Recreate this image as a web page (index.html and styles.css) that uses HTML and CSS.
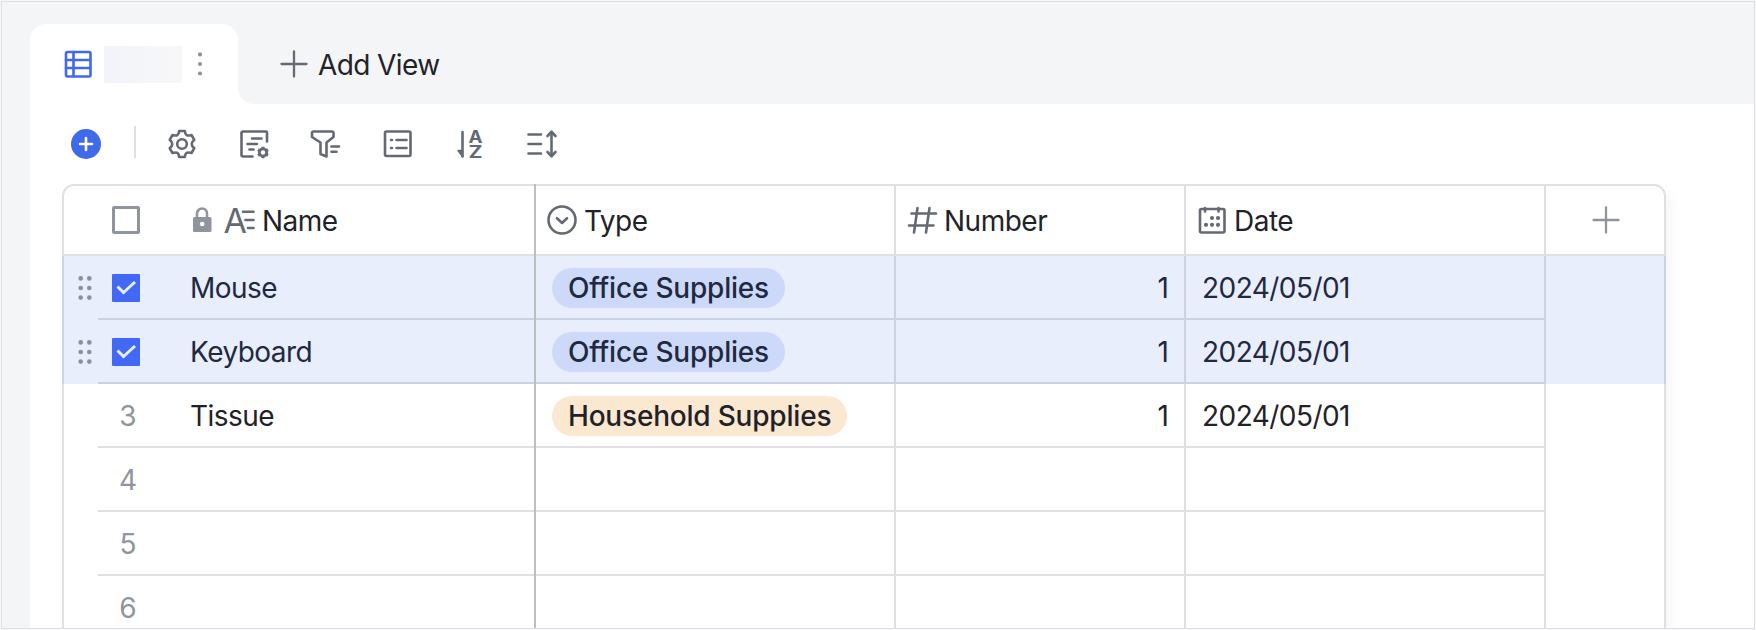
FILE: index.html
```html
<!DOCTYPE html>
<html lang="en">
<head>
    <meta charset="UTF-8">
    <meta name="viewport" content="width=device-width, initial-scale=1.0">
    <title>Grid View</title>
    <link rel="stylesheet" href="styles.css">
</head>
<body>
    <div class="window">
        <div class="tab-bar">
            <div class="tab">
                <svg class="icon-grid" width="28" height="28" viewBox="0 0 28 28">
                    <rect x="2" y="2" width="24.5" height="24.5" rx="1.5"/>
                    <path d="M9.5 2v24M2 10h24M2 18h24"/>
                </svg>
                <span class="tab-name"></span>
                <svg class="icon-more" width="6" height="28" viewBox="0 0 6 28">
                    <circle cx="3" cy="4.4" r="2.1"/>
                    <circle cx="3" cy="14" r="2.1"/>
                    <circle cx="3" cy="23.5" r="2.1"/>
                </svg>
            </div>
            <div class="add-view">
                <svg class="icon thin" width="28" height="28" viewBox="0 0 28 28"><path d="M14 1.5v25M1.5 14h25"/></svg>
                <span class="add-label">Add View</span>
            </div>
        </div>

        <div class="panel">
            <div class="toolbar">
                <svg class="icon-add" width="30" height="30" viewBox="0 0 30 30">
                    <circle cx="15" cy="15" r="15"/>
                    <path d="M15 9v12M9 15h12"/>
                </svg>
                <span class="divider"></span>
                <!-- settings -->
                <svg class="icon" width="30" height="30" viewBox="0 0 30 30">
                    <path d="M12.2 2h5.600q.4 3.200 1.800 4.100 1.600 1 4.900-.1l2.800 4.800q-2.600 2.100-2.600 4.200t2.600 4.200l-2.800 4.800q-3.300-1.100-4.900-.1-1.400.9-1.800 4.100h-5.600q-.4-3.200-1.800-4.100-1.600-1-4.900.1l-2.800-4.800q2.600-2.100 2.600-4.200t-2.600-4.200l2.800-4.800q3.300 1.100 4.900.1 1.400-.9 1.800-4.100z"/>
                    <circle cx="15" cy="15" r="4.8"/>
                </svg>
                <!-- customize fields -->
                <svg class="icon" width="30" height="30" viewBox="0 0 30 30">
                    <path d="M13.5 27.5H4A1.5 1.5 0 0 1 2.5 26V4A1.5 1.5 0 0 1 4 2.5h23a1 1 0 0 1 1 1v9"/>
                    <path d="M13 9.5h9.5M8.5 15H18M10.5 20.5h4"/>
                    <circle class="cog" cx="24" cy="23.5" r="3.7"/>
                    <path class="cog-teeth" d="M24 17.7v11.6M19 20.6l10 5.8M19 26.4l10-5.8"/>
                    <circle class="cog-hole" cx="24" cy="23.5" r="2.2"/>
                </svg>
                <!-- filter -->
                <svg class="icon" width="30" height="30" viewBox="0 0 30 30">
                    <path d="M2.5 2.5H21A1.5 1.5 0 0 1 22.5 4v4l-7 5.500v14l-6-2.500V13.500L1 8V4a1.500 1.500 0 0 1 1.500-1.500z"/>
                    <path d="M20.500 17.500H28M20.500 22.700h5"/>
                </svg>
                <!-- group -->
                <svg class="icon" width="30" height="30" viewBox="0 0 30 30">
                    <rect x="2" y="2.5" width="25.5" height="24.5" rx="1.5"/>
                    <path d="M8 11h1M13.5 11h10M8 19h1M13.5 19h10"/>
                </svg>
                <!-- sort -->
                <svg class="icon" width="30" height="30" viewBox="0 0 30 30">
                    <path d="M7.5 3v24.5"/>
                    <path class="solid" d="M3 21.5h4.5v6z"/>
                    <text class="icon-letter" x="13.5" y="14" textLength="14" lengthAdjust="spacingAndGlyphs">A</text>
                    <text class="icon-letter" x="13.5" y="29" textLength="14" lengthAdjust="spacingAndGlyphs">Z</text>
                </svg>
                <!-- row height -->
                <svg class="icon" width="32" height="30" viewBox="0 0 32 30">
                    <path d="M1.5 5.5H14M1.5 15H14M1.5 24.5H14"/>
                    <path d="M24.5 3.5v23M20.5 7l4-4.300 4 4.300M20.500 23l4 4.300 4-4.300"/>
                </svg>
            </div>

            <div class="grid">
                <div class="row head">
                    <div class="handle"></div>
                    <div class="cell name">
                        <span class="index"><span class="checkbox"></span></span>
                        <svg class="icon-lock" width="20" height="28" viewBox="0 0 20 28">
                            <path d="M5 11V7.5a5 5 0 0 1 10 0V11"/>
                            <rect x="1" y="11" width="18.5" height="15" rx="1.5"/>
                            <circle cx="10.2" cy="18" r="2.3"/>
                        </svg>
                        <svg class="icon icon-text" width="32" height="30" viewBox="0 0 32 30">
                            <text x="-0.5" y="27.5">A</text>
                            <path d="M19 6.7h10.5M21.500 15h8M24 23h5.500"/>
                        </svg>
                        <span class="label">Name</span>
                    </div>
                    <div class="cell type">
                        <svg class="icon" width="30" height="30" viewBox="0 0 30 30">
                            <circle cx="15" cy="15" r="13.5"/>
                            <path d="M10 13.2l5 4.800 5-4.800"/>
                        </svg>
                        <span class="label">Type</span>
                    </div>
                    <div class="cell number">
                        <svg class="icon" width="30" height="30" viewBox="0 0 30 30">
                            <path d="M10.5 3L7 27.5M22.5 3L19 27.5M4.5 8.5H29M2 20.5h24.5"/>
                        </svg>
                        <span class="label">Number</span>
                    </div>
                    <div class="cell date">
                        <svg class="icon icon-date" width="30" height="30" viewBox="0 0 30 30">
                            <rect x="3" y="4" width="24.5" height="23.5" rx="1.5"/>
                            <path d="M8 3v3.5M21.5 3v3.5"/>
                            <g class="dots">
                                <circle cx="15" cy="13" r="2.1"/><circle cx="21" cy="13" r="2.1"/>
                                <circle cx="9" cy="19.8" r="2.1"/><circle cx="15" cy="19.8" r="2.1"/><circle cx="21" cy="19.8" r="2.1"/>
                            </g>
                        </svg>
                        <span class="label">Date</span>
                    </div>
                    <div class="cell add-field">
                        <svg class="icon light thin" width="28" height="28" viewBox="0 0 28 28"><path d="M15 1.5v25M2.5 14h25"/></svg>
                    </div>
                </div>
                <div id="rows"></div>
            </div>
        </div>
    </div>

    <script>
        const records = [
            { name: "Mouse", type: "Office Supplies", color: "blue", number: 1, date: "2024/05/01", selected: true },
            { name: "Keyboard", type: "Office Supplies", color: "blue", number: 1, date: "2024/05/01", selected: true },
            { name: "Tissue", type: "Household Supplies", color: "orange", number: 1, date: "2024/05/01" },
            {}, {}, {}
        ];

        const dragIcon = `
            <svg class="icon-drag" width="14" height="26" viewBox="0 0 14 26">
                <circle cx="2.7" cy="3.4" r="2.3"/><circle cx="11.3" cy="3.4" r="2.3"/>
                <circle cx="2.7" cy="13" r="2.3"/><circle cx="11.3" cy="13" r="2.3"/>
                <circle cx="2.7" cy="22.6" r="2.3"/><circle cx="11.3" cy="22.6" r="2.3"/>
            </svg>`;

        const checkedBox = `
            <svg class="checked" width="28" height="28" viewBox="0 0 28 28">
                <rect width="28" height="28" rx="1"/>
                <path d="M5.5 12.5l6 6L23 8"/>
            </svg>`;

        document.getElementById('rows').innerHTML = records.map((r, i) => `
            <div class="row ${r.selected ? 'selected' : ''}">
                <div class="handle">${r.selected ? dragIcon : ''}</div>
                <div class="cell name">
                    <span class="index">${r.selected ? checkedBox : i + 1}</span>
                    <span class="value">${r.name || ''}</span>
                </div>
                <div class="cell type">${r.type ? `<span class="tag ${r.color}">${r.type}</span>` : ''}</div>
                <div class="cell number">${r.number || ''}</div>
                <div class="cell date"><span class="value">${r.date || ''}</span></div>
                <div class="cell blank"></div>
            </div>
        `).join('');
    </script>
</body>
</html>
```
FILE: styles.css
```css
* {
    margin: 0;
    padding: 0;
    box-sizing: border-box;
}

body {
    background: #f7f7f8;
    padding: 1px;
    height: 630px;
    overflow: hidden;
    font-family: Inter, "Liberation Sans", sans-serif;
    font-size: 28px;
    line-height: 40px;
    color: #1f2329;
}

.window {
    width: 1754px;
    height: 628px;
    border: 1px solid #dee0e3;
    background: #f4f5f7;
    padding: 22px 0 0 28px;
    overflow: hidden;
}

/* tabs */
.tab-bar {
    display: flex;
    height: 80px;
    /* white strip shows through the rounded corner beside the tab */
    background: linear-gradient(to right, #f4f5f7 0 100px, #fff 100px 300px, #f4f5f7 300px);
}

.tab {
    flex: none;
    display: flex;
    align-items: center;
    width: 208px;
    padding-left: 34px;
    background: #fff;
    border-radius: 16px 16px 0 0;
    box-shadow: 0 -16px 0 #f4f5f7;
}

.tab-name {
    width: 78px;
    height: 37px;
    margin: 0 15px 0 12px;
    background: linear-gradient(to right, #f2f4fa, #f7f7f8);
}

.add-view {
    flex: 1;
    display: flex;
    align-items: center;
    gap: 10px;
    padding-left: 42px;
    background: #f4f5f7;
    border-bottom-left-radius: 16px;
}

.add-label {
    padding-top: 2px;
    letter-spacing: -0.6px;
}

/* toolbar */
.panel {
    height: 524px;
    background: #fff;
    padding-left: 32px;
}

.toolbar {
    display: flex;
    align-items: center;
    height: 80px;
    padding-left: 9px;
    gap: 42px;
}

.divider {
    width: 2px;
    height: 32px;
    background: #dee0e3;
    margin: -4px -11px 0 -9px;
}

/* icons */
svg {
    flex: none;
    display: block;
    overflow: visible;
    fill: none;
    stroke-width: 2.6;
    stroke-linecap: round;
    stroke-linejoin: round;
}

.icon {
    stroke: #646a73;
}

.icon.light {
    stroke: #8f959e;
}

.icon.thin {
    stroke-width: 2.3;
}

.icon-grid {
    stroke: #4169eb;
}

.icon-more {
    fill: #8f959e;
}

.icon-add circle {
    fill: #4169eb;
}

.icon-add path {
    stroke: #fff;
}

.icon .cog {
    fill: #646a73;
}

.icon .cog-teeth {
    stroke-width: 3;
    stroke-linecap: butt;
}

.icon .cog-hole {
    fill: #fff;
    stroke: none;
}

.icon .solid {
    fill: #646a73;
    stroke-width: 1.5;
}

.icon-letter {
    fill: #646a73;
    stroke: none;
    font-size: 17px;
    font-weight: 700;
}

.icon-lock path {
    stroke: #8f959e;
}

.icon-lock rect {
    fill: #8f959e;
}

.icon-lock circle {
    fill: #fff;
}

.icon-text text {
    fill: #646a73;
    stroke: none;
    font-size: 34px;
    font-weight: 400;
}

.icon-date .dots {
    fill: #646a73;
    stroke: none;
}

.icon-drag {
    fill: #8790a5;
}

/* grid */
.grid {
    position: relative;
    width: 1604px;
    border-radius: 12px 12px 0 0;
    box-shadow: 4px 6px 12px rgba(31, 35, 41, 0.05);
}

/* edge of the frozen column */
.grid::after {
    content: "";
    position: absolute;
    top: 0;
    bottom: 0;
    left: 472px;
    width: 2px;
    background: #bbbfc4;
}

.row {
    display: grid;
    grid-template-columns: 34px 438px 360px 290px 360px 1fr;
    height: 64px;
    background: #fff;
    border: 0 solid #dee0e3;
    border-width: 0 2px;
}

.row.head {
    height: 72px;
    border-width: 2px;
    border-radius: 12px 12px 0 0;
}

.handle {
    display: flex;
    align-items: center;
    justify-content: center;
    padding-left: 8px;
}

.cell {
    display: flex;
    align-items: center;
    padding: 2px 15px 0 16px;
    border: 0 solid #dee0e3;
    border-width: 0 2px 2px 0;
}

.head .cell {
    padding: 0 11px;
    border-bottom: none;
}

.row .cell.name {
    padding-left: 14px;
    padding-right: 0;
}

.row .add-field,
.row .blank {
    border: none;
    justify-content: center;
}

.row:not(.head) .number {
    justify-content: flex-end;
}

.index {
    display: flex;
    justify-content: center;
    width: 32px;
    margin-right: 46px;
    color: #8f959e;
}

.row .index svg,
.row .checkbox {
    margin-right: 4px;
}

.head .index {
    margin-right: 48px;
}

.checkbox {
    width: 28px;
    height: 28px;
    border: 3px solid #8f959e;
    border-radius: 2px;
}

.checked rect {
    fill: #4169f5;
}

.checked path {
    stroke: #e8eefc;
    stroke-width: 3;
    stroke-linecap: butt;
    stroke-linejoin: miter;
}

.icon-text {
    margin-left: 12px;
}

.label {
    margin-left: 7px;
    padding-top: 1px;
    letter-spacing: -0.5px;
}

.name .label {
    margin-left: 6px;
}

.value {
    letter-spacing: -0.55px;
}

.tag {
    height: 40px;
    padding: 0 16px;
    border-radius: 20px;
    font-weight: 500;
    letter-spacing: -0.2px;
}

.tag.blue {
    background: #cdd9f9;
}

.tag.orange {
    background: #fbe8d0;
}

.selected,
.selected .cell {
    background: #e8eefc;
    border-color: #cbd3e3;
    color: #1f2940;
}
```
